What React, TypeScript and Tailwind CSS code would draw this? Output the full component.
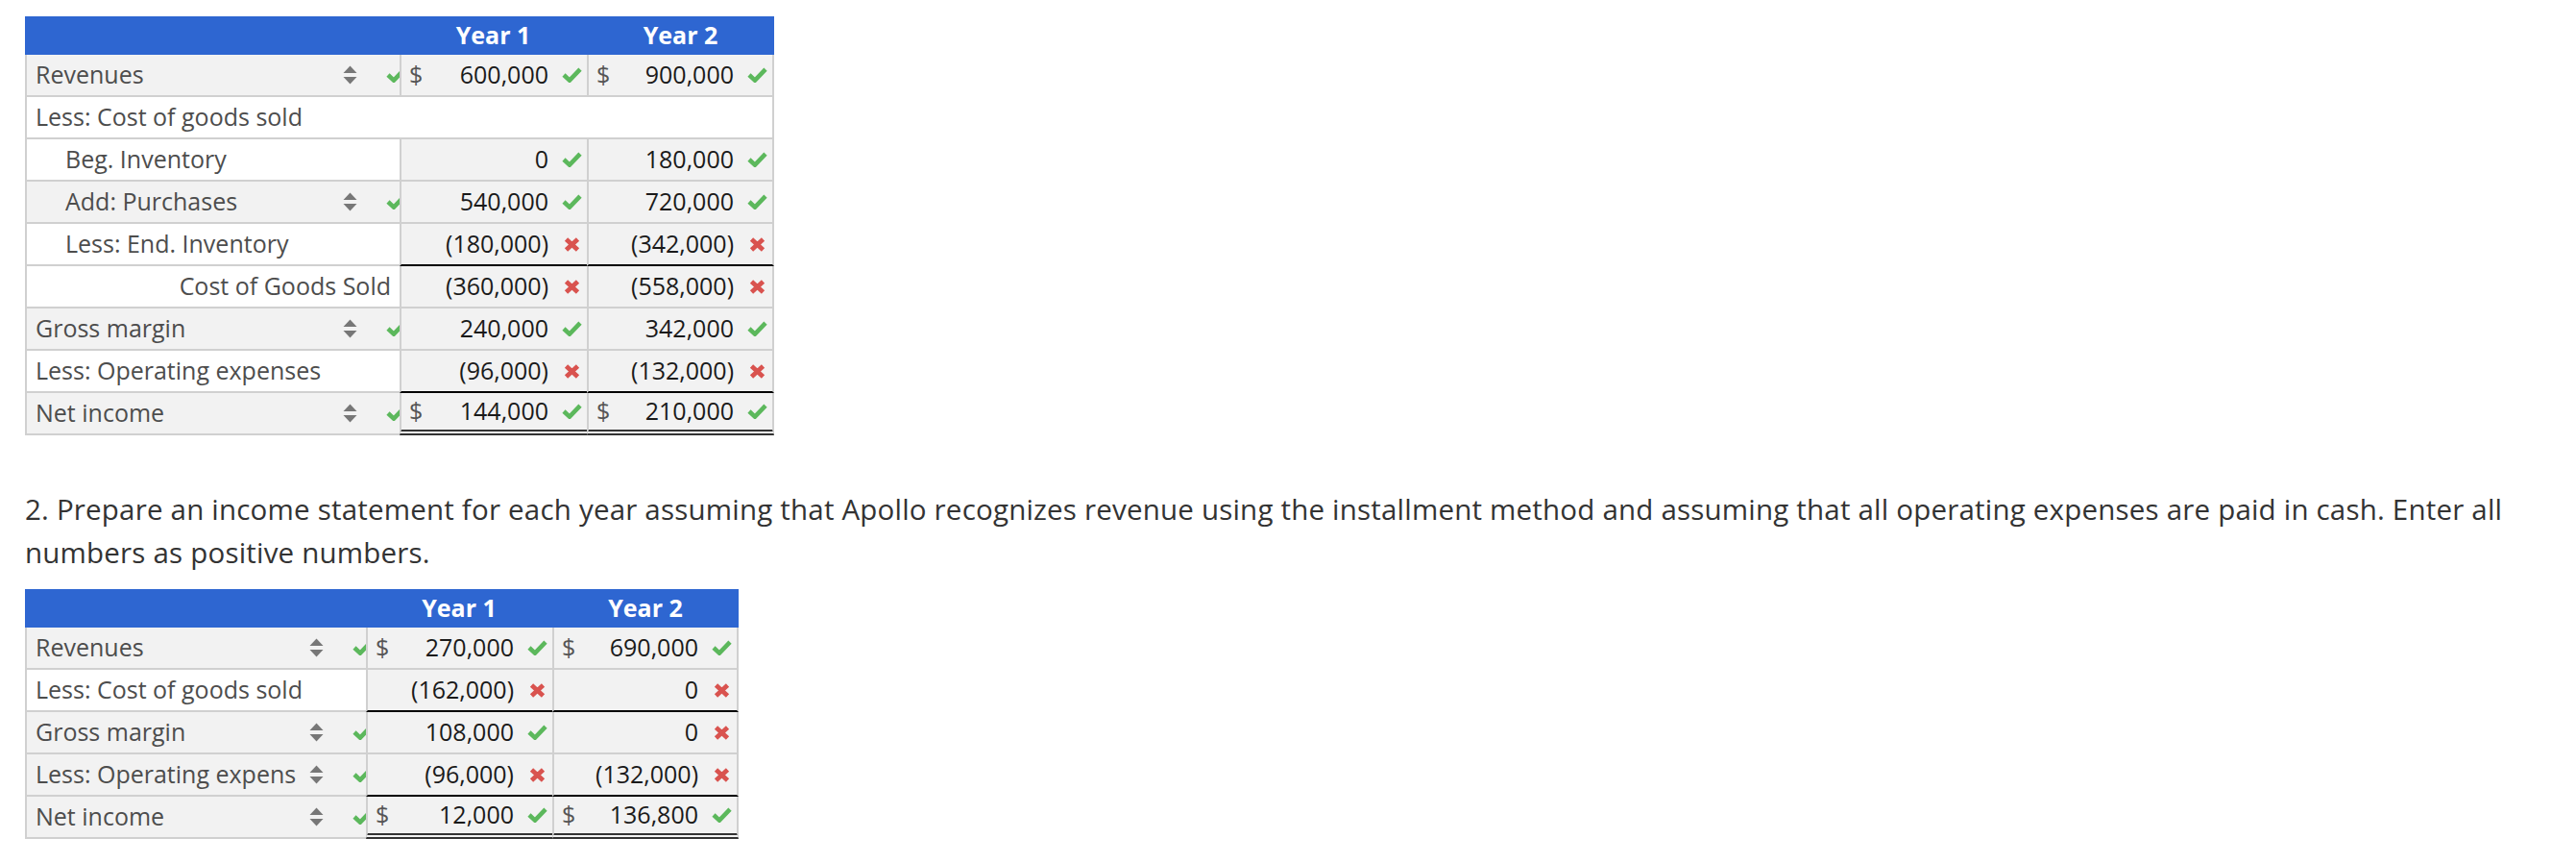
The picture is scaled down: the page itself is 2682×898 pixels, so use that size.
import React from "react";

type Val = { dollar?: boolean; v: string; ok: boolean };
type Row = {
  label: string;
  kind: "select" | "plain" | "indent" | "indentSelect" | "right" | "section";
  vals?: [Val, Val];
  line?: "single" | "double";
};

const first: Row[] = [
  { label: "Revenues", kind: "select", vals: [{ dollar: true, v: "600,000", ok: true }, { dollar: true, v: "900,000", ok: true }] },
  { label: "Less: Cost of goods sold", kind: "section" },
  { label: "Beg. Inventory", kind: "indent", vals: [{ v: "0", ok: true }, { v: "180,000", ok: true }] },
  { label: "Add: Purchases", kind: "indentSelect", vals: [{ v: "540,000", ok: true }, { v: "720,000", ok: true }] },
  { label: "Less: End. Inventory", kind: "indent", vals: [{ v: "(180,000)", ok: false }, { v: "(342,000)", ok: false }], line: "single" },
  { label: "Cost of Goods Sold", kind: "right", vals: [{ v: "(360,000)", ok: false }, { v: "(558,000)", ok: false }] },
  { label: "Gross margin", kind: "select", vals: [{ v: "240,000", ok: true }, { v: "342,000", ok: true }] },
  { label: "Less: Operating expenses", kind: "plain", vals: [{ v: "(96,000)", ok: false }, { v: "(132,000)", ok: false }], line: "single" },
  { label: "Net income", kind: "select", vals: [{ dollar: true, v: "144,000", ok: true }, { dollar: true, v: "210,000", ok: true }], line: "double" },
];

const second: Row[] = [
  { label: "Revenues", kind: "select", vals: [{ dollar: true, v: "270,000", ok: true }, { dollar: true, v: "690,000", ok: true }] },
  { label: "Less: Cost of goods sold", kind: "plain", vals: [{ v: "(162,000)", ok: false }, { v: "0", ok: false }], line: "single" },
  { label: "Gross margin", kind: "select", vals: [{ v: "108,000", ok: true }, { v: "0", ok: false }] },
  { label: "Less: Operating expens", kind: "select", vals: [{ v: "(96,000)", ok: false }, { v: "(132,000)", ok: false }], line: "single" },
  { label: "Net income", kind: "select", vals: [{ dollar: true, v: "12,000", ok: true }, { dollar: true, v: "136,800", ok: true }], line: "double" },
];

const Check = () => (
  <svg width="21" height="16" viewBox="0 0 21 16">
    <path d="M2 8 L8 13.6 L19 2.2" fill="none" stroke="#5cb85c" strokeWidth="4.6" />
  </svg>
);

const Cross = () => (
  <svg width="17" height="15" viewBox="0 0 17 15">
    <path d="M2.5 2 L14.5 13 M14.5 2 L2.5 13" fill="none" stroke="#d9534f" strokeWidth="4.8" />
  </svg>
);

const Arrows = () => (
  <svg width="15" height="20" viewBox="0 0 15 20" className="shrink-0">
    <path d="M0.5 8 L7.5 0.5 L14.5 8 Z" fill="#777" />
    <path d="M0.5 12 L14.5 12 L7.5 19.5 Z" fill="#777" />
  </svg>
);

function Statement({ rows, cols }: { rows: Row[]; cols: [number, number, number] }) {
  const [lw, w1, w2] = cols;
  return (
    <div className="flex flex-col" style={{ width: lw + w1 + w2 }}>
      <div className="flex h-[40px] bg-[#2e66d1] text-white font-bold text-[25px]">
        <div style={{ width: lw }} />
        <div style={{ width: w1 }} className="flex items-center justify-center">Year 1</div>
        <div style={{ width: w2 }} className="flex items-center justify-center">Year 2</div>
      </div>
      {rows.map((r, i) => {
        if (r.kind === "section") {
          return (
            <div key={i} className="flex h-[44px] items-center bg-white border-x-2 border-b-2 border-[#d0d0d0] pl-[9px] text-[25px] text-[#4d4d4d]">
              {r.label}
            </div>
          );
        }
        const sel = r.kind === "select" || r.kind === "indentSelect";
        const indent = r.kind === "indent" || r.kind === "indentSelect";
        return (
          <div key={i} className="flex h-[44px] text-[25px]">
            <div
              style={{ width: lw }}
              className={`flex items-center border-l-2 border-b-2 border-[#d0d0d0] text-[#4d4d4d] whitespace-nowrap ${
                sel ? "bg-[#f2f2f2]" : "bg-white"
              } ${indent ? "pl-[40px]" : "pl-[9px]"} ${r.kind === "right" ? "justify-end pr-[9px]" : ""}`}
            >
              <span>{r.label}</span>
              {sel && (
                <>
                  <span className="ml-auto flex items-center">
                    <Arrows />
                  </span>
                  <span className="ml-[30px] mr-[-7px] flex items-center">
                    <Check />
                  </span>
                </>
              )}
            </div>
            {r.vals!.map((c, j) => (
              <div
                key={j}
                style={{ width: j === 0 ? w1 : w2 }}
                className={`flex items-center bg-[#f2f2f2] border-l-2 border-[#d0d0d0] pl-[8px] pr-[5px] ${
                  j === 1 ? "border-r-2" : ""
                } ${
                  r.line === "single"
                    ? "border-b-2 border-b-black"
                    : r.line === "double"
                    ? "border-b-[6px] border-double border-b-[#333]"
                    : "border-b-2"
                }`}
              >
                <span className="text-[#555] w-[14px]">{c.dollar ? "$" : ""}</span>
                <span className="flex-1 text-right text-[#1a1a1a]">{c.v}</span>
                <span className="ml-[14px] w-[21px] flex items-center justify-center">
                  {c.ok ? <Check /> : <Cross />}
                </span>
              </div>
            ))}
          </div>
        );
      })}
    </div>
  );
}

export default function App() {
  return (
    <div
      className="min-h-[898px] w-[2682px] bg-white pt-[17px] pl-[26px]"
      style={{ fontFamily: '"Open Sans", "Noto Sans", sans-serif' }}
    >
      <Statement rows={first} cols={[390, 195, 195]} />
      <p className="mt-[54px] w-[2630px] text-[29.5px] tracking-[0.2px] leading-[45px] text-[#333]">
        2. Prepare an income statement for each year assuming that Apollo recognizes revenue using the installment method and
        assuming that all operating expenses are paid in cash. Enter all numbers as positive numbers.
      </p>
      <div className="mt-[16px]">
        <Statement rows={second} cols={[355, 194, 194]} />
      </div>
    </div>
  );
}
